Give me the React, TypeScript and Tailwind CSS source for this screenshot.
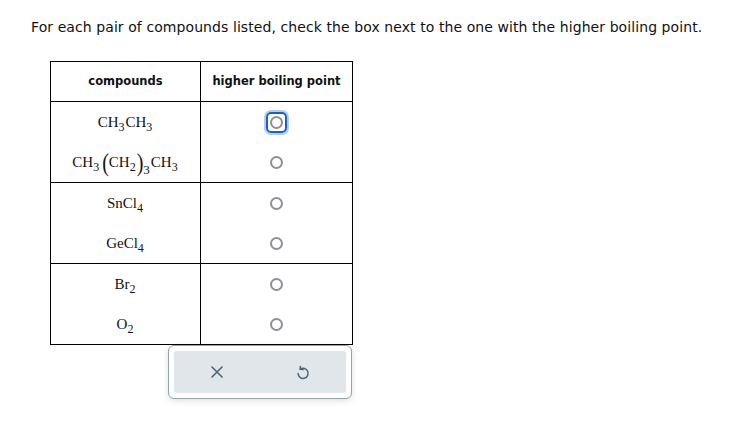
import React, { useState } from 'react';

type Pair = { a: React.ReactNode; b: React.ReactNode };

const Sub = ({ children }: { children: React.ReactNode }) => (
  <span className="inline-block text-[12px] translate-y-[5px] leading-none mr-[1px]">{children}</span>
);

const pairs: Pair[] = [
  {
    a: (
      <>
        CH<Sub>3</Sub>CH<Sub>3</Sub>
      </>
    ),
    b: (
      <>
        CH<Sub>3</Sub>
        <span className="text-[20px] leading-none ml-[2px] scale-y-125 inline-block">(</span>CH<Sub>2</Sub>
        <span className="text-[20px] leading-none scale-y-125 inline-block">)</span>
        <span className="inline-block text-[13px] translate-y-[7px] leading-none mr-[1px]">3</span>CH<Sub>3</Sub>
      </>
    ),
  },
  {
    a: (
      <>
        SnCl<Sub>4</Sub>
      </>
    ),
    b: (
      <>
        GeCl<Sub>4</Sub>
      </>
    ),
  },
  {
    a: (
      <>
        Br<Sub>2</Sub>
      </>
    ),
    b: (
      <>
        O<Sub>2</Sub>
      </>
    ),
  },
];

const Radio = ({ checked, focused }: { checked: boolean; focused: boolean }) => (
  <span
    className={
      focused
        ? 'flex items-center justify-center w-[21px] h-[21px] rounded-[5px] border-[2.5px] border-[#1560d4] ring-2 ring-[#b5cdf0]'
        : 'flex items-center justify-center w-[21px] h-[21px]'
    }
  >
    <span className="w-[13px] h-[13px] rounded-full border-2 border-[#8f8f98] bg-white flex items-center justify-center">
      {checked && <span className="w-[5px] h-[5px] rounded-full bg-[#555]" />}
    </span>
  </span>
);

export default function App() {
  const [sel, setSel] = useState<Record<number, number>>({});

  return (
    <div className="w-[730px] h-[430px] bg-white font-['DejaVu_Sans',sans-serif] text-[#111]">
      <p className="pt-[17px] pl-[31px] text-[14px] leading-[20px] tracking-[0.08px]">
        For each pair of compounds listed, check the box next to the one with the higher boiling point.
      </p>

      <div className="pl-[50px] pt-[24px]">
        <table className="border-collapse border border-black">
          <thead>
            <tr className="h-[40px]">
              <th className="w-[150px] border border-black text-[11.5px] font-bold">compounds</th>
              <th className="w-[152px] border border-black text-[11.5px] font-bold">higher boiling point</th>
            </tr>
          </thead>
          <tbody>
            {pairs.map((p, i) => (
              <tr key={i}>
                <td className="border border-black p-0">
                  <div className="flex flex-col font-['Liberation_Serif',serif] text-[15px]">
                    <div className="h-[40px] flex items-center justify-center">{p.a}</div>
                    <div className="h-[40px] flex items-center justify-center">{p.b}</div>
                  </div>
                </td>
                <td className="border border-black p-0">
                  <div className="flex flex-col">
                    {[0, 1].map(j => (
                      <button
                        key={j}
                        onClick={() => setSel({ ...sel, [i]: j })}
                        className="h-[40px] flex items-center justify-center"
                      >
                        <Radio checked={sel[i] === j} focused={i === 0 && j === 0} />
                      </button>
                    ))}
                  </div>
                </td>
              </tr>
            ))}
          </tbody>
        </table>

        <div className="ml-[118px] w-[184px] h-[54px] rounded-[6px] border border-[#93a4ad] bg-white p-[5px] shadow-[0_2px_6px_rgba(0,0,0,0.12)]">
          <div className="flex h-full rounded-[3px] bg-[#e0e6e9]">
            <button onClick={() => setSel({})} className="flex-1 flex items-center justify-center text-[#4b6775]">
              <svg width="14" height="14" viewBox="0 0 14 14" fill="none" stroke="currentColor" strokeWidth="1.6" strokeLinecap="round">
                <path d="M2 2 L12 12 M12 2 L2 12" />
              </svg>
            </button>
            <button onClick={() => setSel({})} className="flex-1 flex items-center justify-center text-[#4b6775]">
              <svg width="14" height="15" viewBox="0 0 14 15" fill="none" stroke="currentColor" strokeWidth="1.5" strokeLinecap="round" strokeLinejoin="round">
                <path d="M4.2 4.3 A5 5 0 1 1 2.1 8.6" />
                <path d="M4.4 1.4 L4.2 4.3 L7.1 4.6" />
              </svg>
            </button>
          </div>
        </div>
      </div>
    </div>
  );
}
